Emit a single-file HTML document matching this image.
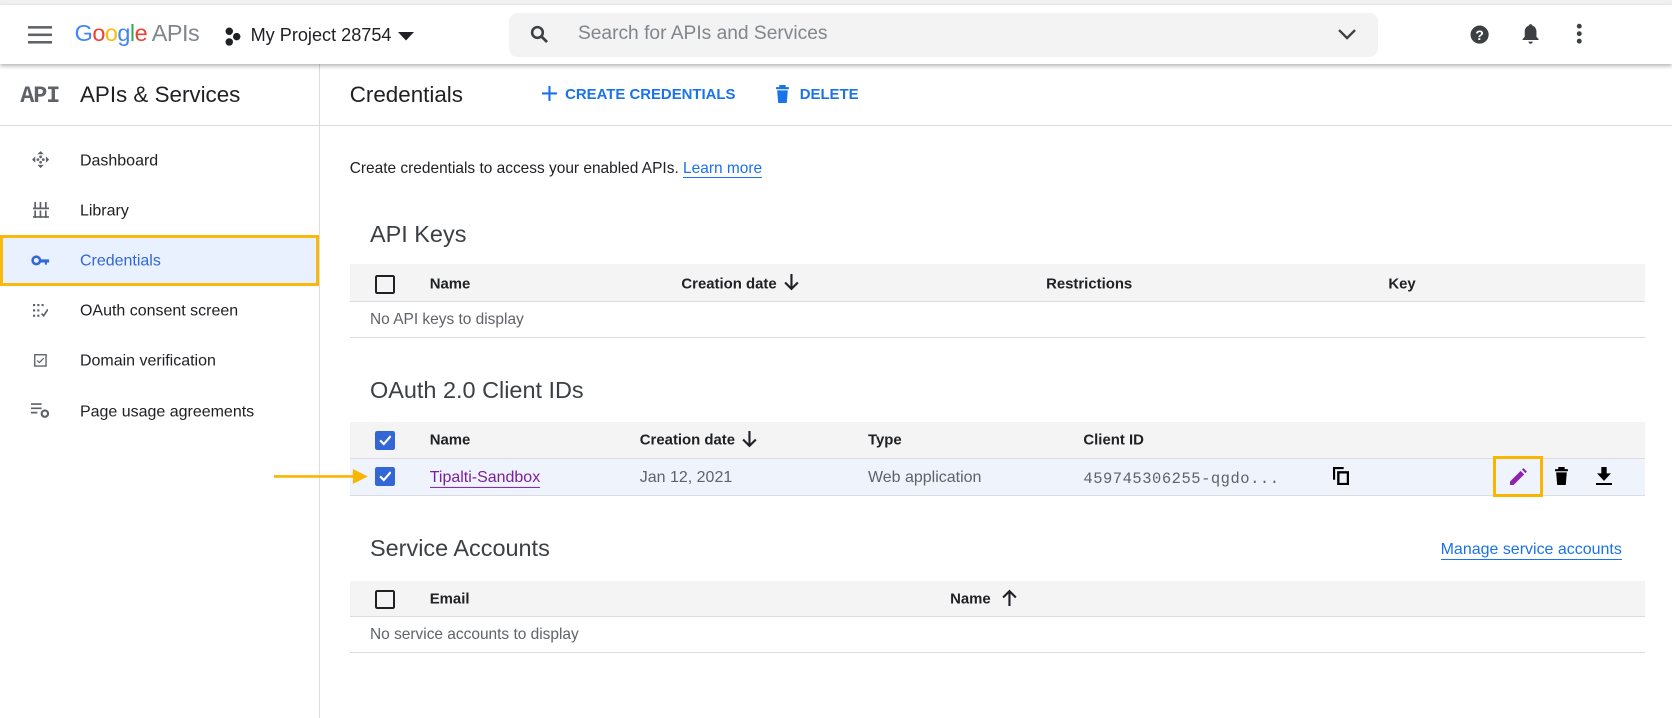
<!DOCTYPE html>
<html><head><meta charset="utf-8"><style>
*{box-sizing:border-box;margin:0;padding:0}
html,body{width:1672px;height:718px;overflow:hidden;background:#fff}
#w{zoom:1.06633;position:relative;width:1568px;height:673px;font-family:"Liberation Sans",Arial,sans-serif;color:#202124}
.a{position:absolute;white-space:nowrap}
.top{position:absolute;left:0;top:0;width:1568px;height:6px;background:#f1f1f1}
.hdr{position:absolute;left:0;top:5px;width:1568px;height:55px;background:#fff;box-shadow:0 2px 4px rgba(0,0,0,.3);z-index:2}
.th{position:absolute;left:328px;width:1215px;background:#f4f4f4;border-bottom:1px solid #dadce0}
.row{position:absolute;left:328px;width:1215px;border-bottom:1px solid #dadce0}
.hd{font-size:14px;font-weight:bold;color:#202124;transform:translateY(-45%)}
.tx{font-size:15px;color:#5f6368;transform:translateY(-45%)}
.cb{position:absolute;width:18px;height:18px;border:2px solid #202124;border-radius:2px}
.cbc{position:absolute;width:18px;height:18px;background:#3367d6;border-radius:2px}
.nav{font-size:15px;transform:translateY(-42%)}
</style></head><body><div id="w">
<div class="top"></div>
<div class="hdr">
 <svg class="a" style="left:26px;top:18px" width="23" height="18"><rect y="1" width="23" height="2.4" fill="#5f6368"/><rect y="8" width="23" height="2.4" fill="#5f6368"/><rect y="15" width="23" height="2.4" fill="#5f6368"/></svg>
 <div class="a" style="left:70px;top:14px;font-size:22px;letter-spacing:-0.5px"><span style="color:#4285f4">G</span><span style="color:#ea4335">o</span><span style="color:#fbbc05">o</span><span style="color:#4285f4">g</span><span style="color:#34a853">l</span><span style="color:#ea4335">e</span> <span style="color:#80868b">APIs</span></div>
 <svg class="a" style="left:211px;top:20px" width="16" height="18"><circle cx="4" cy="4" r="3.5" fill="#202124"/><circle cx="11" cy="9" r="3.5" fill="#202124"/><circle cx="4" cy="14" r="3.5" fill="#202124"/></svg>
 <div class="a" style="left:235px;top:18px;font-size:17px">My Project 28754</div>
 <svg class="a" style="left:373px;top:25px" width="15" height="8"><path d="M0 0h15L7.5 8z" fill="#202124"/></svg>
 <div class="a" style="left:477px;top:7px;width:815px;height:41px;background:#f3f3f3;border-radius:8px"></div>
 <svg class="a" style="left:497px;top:18px" width="18" height="18"><circle cx="7" cy="7" r="5" fill="none" stroke="#3c4043" stroke-width="2.4"/><path d="M11 11l5 5" stroke="#3c4043" stroke-width="2.6"/></svg>
 <div class="a" style="left:542px;top:17px;font-size:18px;color:#80868b">Search for APIs and Services</div>
 <svg class="a" style="left:1255px;top:22px" width="17" height="11"><path d="M1 1l7.5 7.5L16 1" fill="none" stroke="#3c4043" stroke-width="2.2"/></svg>
 <svg class="a" style="left:1379px;top:18px" width="18" height="18"><circle cx="9" cy="9" r="8.5" fill="#3c4043"/><text x="9" y="14" font-size="13" font-weight="bold" fill="#fff" text-anchor="middle" font-family="Liberation Sans">?</text></svg>
 <svg class="a" style="left:1426px;top:17px" width="18" height="21"><path d="M9 1c-1 0-1.5.7-1.5 1.4C5 3.2 3.5 5.5 3.5 8v5L1.5 15v1h15v-1l-2-2V8c0-2.5-1.5-4.8-4-5.6C10.5 1.7 10 1 9 1zM7 17.5h4c0 1.1-.9 2-2 2s-2-.9-2-2z" fill="#3c4043"/></svg>
 <svg class="a" style="left:1477px;top:17px" width="8" height="20"><circle cx="4" cy="3" r="2.3" fill="#3c4043"/><circle cx="4" cy="10" r="2.3" fill="#3c4043"/><circle cx="4" cy="17" r="2.3" fill="#3c4043"/></svg>
</div>
<!-- sidebar -->
<div class="a" style="left:299px;top:60px;width:1px;height:613px;background:#dadce0"></div>
<div class="a" style="left:0;top:117px;width:1568px;height:1px;background:#dadce0"></div>
<div class="a" style="left:19px;top:78px;font-family:'Liberation Mono',monospace;font-weight:bold;font-size:22px;color:#5f6368;letter-spacing:-1px">API</div>
<div class="a" style="left:75px;top:77px;font-size:21px">APIs &amp; Services</div>
<div class="a" style="left:0;top:220px;width:299px;height:48px;background:#e8f0fe;border:3px solid #f9b500;opacity:.95"></div>
<svg class="a" style="left:29px;top:141px" width="18" height="18"><path d="M9 1l3 3H6zM9 17l3-3H6zM1 9l3-3v6zM17 9l-3-3v6z" fill="#5f6368"/><circle cx="6.5" cy="9" r="1.3" fill="#5f6368"/><circle cx="11.5" cy="9" r="1.3" fill="#5f6368"/><circle cx="9" cy="6.5" r="1.3" fill="#5f6368"/><circle cx="9" cy="11.5" r="1.3" fill="#5f6368"/></svg>
<div class="a nav" style="left:75px;top:150px">Dashboard</div>
<svg class="a" style="left:31px;top:189px" width="15" height="15"><path d="M2 0v6M7 0v6M12 0v6M0 6h15M2 8v7M7 8v7M12 8v7M0 14h15" stroke="#5f6368" stroke-width="1.6"/></svg>
<div class="a nav" style="left:75px;top:197px">Library</div>
<svg class="a" style="left:29px;top:238px" width="18" height="12"><circle cx="5" cy="6" r="3.5" fill="none" stroke="#3367d6" stroke-width="2.4"/><path d="M8 5h9v3h-2v2h-2V8H8z" fill="#3367d6"/></svg>
<div class="a nav" style="left:75px;top:244px;color:#3367d6">Credentials</div>
<svg class="a" style="left:31px;top:285px" width="14" height="12"><g fill="#5f6368"><rect x="0" y="0" width="2" height="2"/><rect x="4" y="0" width="2" height="2"/><rect x="8" y="0" width="2" height="2"/><rect x="0" y="5" width="2" height="2"/><rect x="4" y="5" width="2" height="2"/><rect x="0" y="10" width="2" height="2"/><rect x="4" y="10" width="2" height="2"/></g><path d="M8 9l2 2 4-6" stroke="#5f6368" stroke-width="1.6" fill="none"/></svg>
<div class="a nav" style="left:75px;top:291px">OAuth consent screen</div>
<svg class="a" style="left:32px;top:332px" width="12" height="12"><rect x=".7" y=".7" width="10.6" height="10.6" fill="none" stroke="#5f6368" stroke-width="1.3"/><path d="M3 6l2 2 4-4" stroke="#5f6368" stroke-width="1.2" fill="none"/></svg>
<div class="a nav" style="left:75px;top:338px">Domain verification</div>
<svg class="a" style="left:29px;top:378px" width="18" height="14"><path d="M0 1h10M0 5h10M0 9h6" stroke="#5f6368" stroke-width="1.6"/><circle cx="13" cy="10" r="3" fill="none" stroke="#5f6368" stroke-width="2"/></svg>
<div class="a nav" style="left:75px;top:385px">Page usage agreements</div>
<!-- main header -->
<div class="a" style="left:328px;top:77px;font-size:21px">Credentials</div>
<svg class="a" style="left:508px;top:81px" width="14" height="14"><path d="M7 0v14M0 7h14" stroke="#1a73e8" stroke-width="2"/></svg>
<div class="a" style="left:530px;top:81px;font-size:14px;color:#1a73e8;font-weight:bold">CREATE CREDENTIALS</div>
<svg class="a" style="left:727px;top:80px" width="14" height="17"><path d="M1 2h12v2H1zM4 0h6v2H4zM2 5h10l-1 12H3z" fill="#1a73e8"/></svg>
<div class="a" style="left:750px;top:81px;font-size:14px;color:#1a73e8;font-weight:bold">DELETE</div>
<div class="a" style="left:328px;top:150px;font-size:14.5px">Create credentials to access your enabled APIs. <span style="color:#1a73e8;border-bottom:1px solid #1a73e8">Learn more</span></div>
<!-- API keys -->
<div class="a" style="left:347px;top:207px;font-size:22px;color:#3c4043">API Keys</div>
<div class="th" style="top:248px;height:35px"></div>
<div class="cb" style="left:352px;top:258px"></div>
<div class="a hd" style="left:403px;top:265px">Name</div>
<div class="a hd" style="left:639px;top:265px">Creation date</div>
<svg class="a" style="left:735px;top:257px" width="14" height="16"><path d="M7 0v14M1 8l6 6 6-6" stroke="#202124" stroke-width="2" fill="none"/></svg>
<div class="a hd" style="left:981px;top:265px">Restrictions</div>
<div class="a hd" style="left:1302px;top:265px">Key</div>
<div class="row" style="top:283px;height:34px"></div>
<div class="a tx" style="left:347px;top:299px;font-size:14.5px">No API keys to display</div>
<!-- OAuth -->
<div class="a" style="left:347px;top:354px;font-size:22px;color:#3c4043">OAuth 2.0 Client IDs</div>
<div class="th" style="top:396px;height:34px"></div>
<div class="cbc" style="left:352px;top:404px"></div>
<svg class="a" style="left:355px;top:408px" width="12" height="10"><path d="M1 5l3.5 3.5L11 1" stroke="#fff" stroke-width="2" fill="none"/></svg>
<div class="a hd" style="left:403px;top:412px">Name</div>
<div class="a hd" style="left:600px;top:412px">Creation date</div>
<svg class="a" style="left:696px;top:404px" width="14" height="16"><path d="M7 0v14M1 8l6 6 6-6" stroke="#202124" stroke-width="2" fill="none"/></svg>
<div class="a hd" style="left:814px;top:412px">Type</div>
<div class="a hd" style="left:1016px;top:412px">Client ID</div>
<div class="row" style="top:430px;height:35px;background:#eef3fc"></div>
<div class="cbc" style="left:352px;top:438px"></div>
<svg class="a" style="left:355px;top:442px" width="12" height="10"><path d="M1 5l3.5 3.5L11 1" stroke="#fff" stroke-width="2" fill="none"/></svg>
<div class="a tx" style="left:403px;top:447px;color:#7b1fa2;border-bottom:1px solid #7b1fa2;line-height:18px">Tipalti-Sandbox</div>
<div class="a tx" style="left:600px;top:447px">Jan 12, 2021</div>
<div class="a tx" style="left:814px;top:447px">Web application</div>
<div class="a tx" style="left:1016px;top:448px;font-family:'Liberation Mono',monospace;font-size:14.5px;letter-spacing:.5px">459745306255-qgdo...</div>
<svg class="a" style="left:1250px;top:438px" width="15" height="17"><path d="M1 12V1h9" stroke="#000" stroke-width="2" fill="none"/><rect x="5" y="5" width="9" height="11" fill="none" stroke="#000" stroke-width="2.2"/></svg>
<div class="a" style="left:1400px;top:428px;width:47px;height:38px;border:3px solid #f9b500"></div>
<svg class="a" style="left:1416px;top:439px" width="16" height="16"><path d="M0 16v-3.3L10 2.7 13.3 6 3.3 16zM11.2 1.5l1.4-1.4 3.3 3.3-1.4 1.4z" fill="#8e24aa"/></svg>
<svg class="a" style="left:1457px;top:438px" width="14" height="17"><path d="M1 2h12v2H1zM4 0h6v2H4zM2 5h10l-1 12H3z" fill="#000"/></svg>
<svg class="a" style="left:1497px;top:438px" width="15" height="17"><path d="M5 0h5v6h4l-6.5 7L1 6h4zM0 15h15v2H0z" fill="#000"/></svg>
<svg class="a" style="left:257px;top:440px" width="90" height="14"><path d="M0 7h78" stroke="#f9b500" stroke-width="2.5"/><path d="M74 0l14 7-14 7z" fill="#f9b500"/></svg>
<!-- Service accounts -->
<div class="a" style="left:347px;top:502px;font-size:22px;color:#3c4043">Service Accounts</div>
<div class="a" style="left:1351px;top:506px;font-size:15px;color:#1a73e8;border-bottom:1px solid #1a73e8;line-height:18px">Manage service accounts</div>
<div class="th" style="top:545px;height:34px"></div>
<div class="cb" style="left:352px;top:553px"></div>
<div class="a hd" style="left:403px;top:561px">Email</div>
<div class="a hd" style="left:891px;top:561px">Name</div>
<svg class="a" style="left:940px;top:552px" width="14" height="16"><path d="M7 16V2M1 8l6-6 6 6" stroke="#202124" stroke-width="2" fill="none"/></svg>
<div class="row" style="top:579px;height:33px"></div>
<div class="a tx" style="left:347px;top:595px;font-size:14.5px">No service accounts to display</div>
</div></body></html>
